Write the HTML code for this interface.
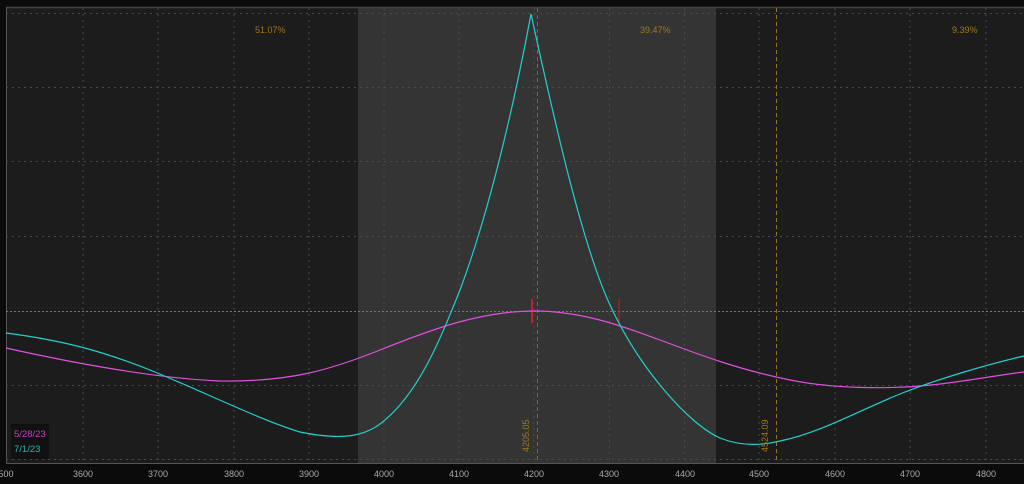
<!DOCTYPE html>
<html><head><style>
html,body{margin:0;padding:0;background:#0b0b0b;width:1024px;height:484px;overflow:hidden}
svg{display:block}
text{font-family:"Liberation Sans",sans-serif}
</style></head><body>
<svg width="1024" height="484" viewBox="0 0 1024 484">
<rect x="0" y="0" width="1024" height="484" fill="#0b0b0b"/>
<rect x="6" y="7" width="1018" height="457" fill="#1c1c1c"/>
<rect x="358" y="7" width="358" height="457" fill="#343434"/>
<line x1="6" y1="7.5" x2="1024" y2="7.5" stroke="#444" stroke-width="1.5"/>
<line x1="6.5" y1="7" x2="6.5" y2="464" stroke="#555"/>
<line x1="6" y1="463.5" x2="1024" y2="463.5" stroke="#555"/>
<g stroke="#4a4a4a" stroke-dasharray="2,4" stroke-width="1">
<line x1="83" y1="8" x2="83" y2="463"/><line x1="158" y1="8" x2="158" y2="463"/>
<line x1="234" y1="8" x2="234" y2="463"/><line x1="309" y1="8" x2="309" y2="463"/>
<line x1="384" y1="8" x2="384" y2="463"/><line x1="459" y1="8" x2="459" y2="463"/>
<line x1="534" y1="8" x2="534" y2="463"/><line x1="609.5" y1="8" x2="609.5" y2="463"/>
<line x1="684.5" y1="8" x2="684.5" y2="463"/><line x1="759" y1="8" x2="759" y2="463"/>
<line x1="835" y1="8" x2="835" y2="463"/><line x1="910" y1="8" x2="910" y2="463"/>
<line x1="986" y1="8" x2="986" y2="463"/>
<line x1="6" y1="13.5" x2="1024" y2="13.5"/><line x1="6" y1="87.5" x2="1024" y2="87.5"/>
<line x1="6" y1="161.5" x2="1024" y2="161.5"/><line x1="6" y1="236.5" x2="1024" y2="236.5"/>
<line x1="6" y1="385.5" x2="1024" y2="385.5"/><line x1="6" y1="459.5" x2="1024" y2="459.5"/>
</g>
<line x1="6" y1="311.5" x2="1024" y2="311.5" stroke="#777" stroke-dasharray="2,2"/>
<line x1="537.5" y1="8" x2="537.5" y2="463" stroke="#8a6a20" stroke-dasharray="4,3"/>
<line x1="776.5" y1="8" x2="776.5" y2="463" stroke="#9a7420" stroke-dasharray="4,3"/>
<line x1="532" y1="299" x2="532" y2="323" stroke="#c0202a" stroke-width="2"/>
<line x1="619" y1="299" x2="619" y2="323" stroke="#c0202a" stroke-width="1"/>
<path d="M6,348 C60,360 150,378 220,381 C290,382 330,370 380,350 C430,330 480,311 534,311 C580,311 620,325 660,340 C700,355 740,370 790,380 C840,390 900,389 940,384 C980,379 1005,374 1024,372" fill="none" stroke="#e050e0" stroke-width="1.2"/>
<path d="M6,333 C60,340 100,350 150,370 C200,390 260,420 300,432 C340,440 365,438 385,420 C420,390 440,340 460,290 C490,210 515,100 531,14 C550,100 580,240 610,305 C640,370 690,425 720,438 C740,446 760,446 780,441 C820,433 860,410 900,394 C940,378 990,364 1024,356" fill="none" stroke="#22d0d0" stroke-width="1.2"/>
<g fill="#a07818" font-size="9">
<text x="255" y="33">51.07%</text>
<text x="640" y="33">39.47%</text>
<text x="952" y="33">9.39%</text>
<text transform="translate(529,452) rotate(-90)">4205.05</text>
<text transform="translate(768,452) rotate(-90)">4524.09</text>
</g>
<rect x="11" y="424" width="38" height="35" fill="#111"/>
<text x="14" y="437" fill="#c040c0" font-size="9.5">5/28/23</text>
<text x="14" y="452" fill="#20b8b8" font-size="9.5">7/1/23</text>
<g fill="#aaa" font-size="9" text-anchor="middle">
<text x="6" y="477">500</text><text x="83" y="477">3600</text><text x="158" y="477">3700</text>
<text x="234" y="477">3800</text><text x="309" y="477">3900</text><text x="384" y="477">4000</text>
<text x="459" y="477">4100</text><text x="534" y="477">4200</text><text x="609" y="477">4300</text>
<text x="685" y="477">4400</text><text x="759" y="477">4500</text><text x="835" y="477">4600</text>
<text x="910" y="477">4700</text><text x="986" y="477">4800</text>
</g>
</svg>
</body></html>
